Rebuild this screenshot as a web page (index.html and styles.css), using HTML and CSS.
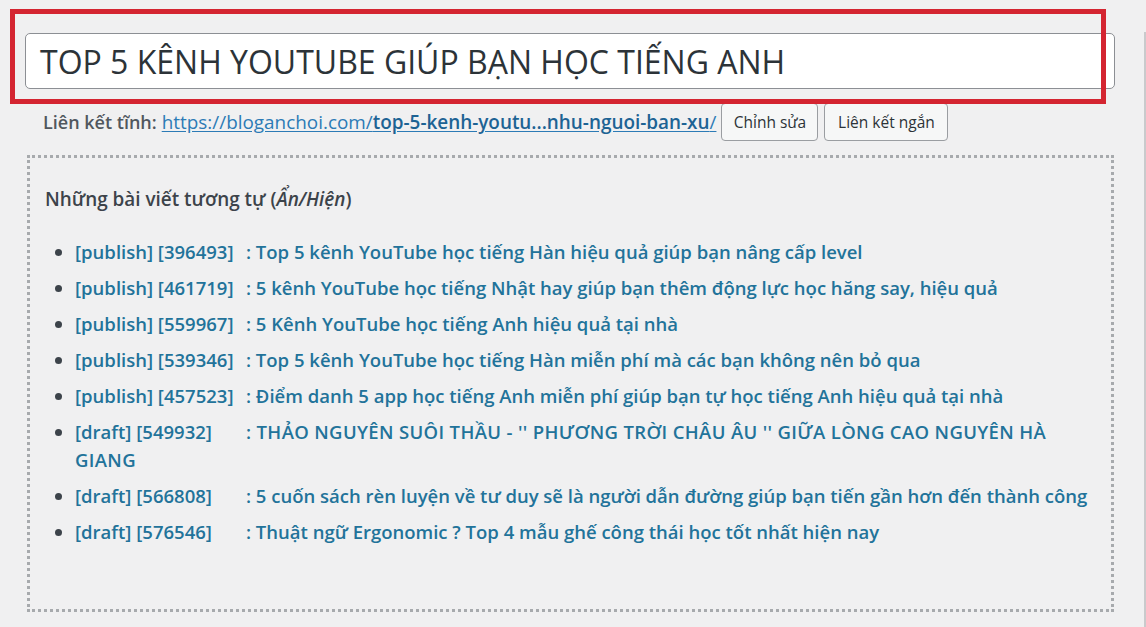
FILE: index.html
```html
<!DOCTYPE html>
<html lang="vi">
<head>
<meta charset="utf-8">
<title>Sửa bài viết</title>
<link rel="stylesheet" href="styles.css">
</head>
<body>
<div class="page">
  <div class="main">
    <div class="titlediv">
      <div class="title-input">TOP 5 KÊNH YOUTUBE GIÚP BẠN HỌC TIẾNG ANH</div>
      <div class="highlight"></div>
    </div>
    <div class="permalink">
      <span class="pl-label">Liên kết tĩnh:</span>
      <a class="pl-link" href="#">https://bloganchoi.com/<b>top-5-kenh-youtu...nhu-nguoi-ban-xu</b>/</a>
      <span class="btn btn-edit">Chỉnh sửa</span>
      <span class="btn btn-short">Liên kết ngắn</span>
    </div>
    <div class="related">
      <p class="related-head">Những bài viết tương tự (<em>Ẩn/Hiện</em>)</p>
      <ul class="related-list">
        <li><span class="meta">[publish] [396493]</span>: Top 5 kênh YouTube học tiếng Hàn hiệu quả giúp bạn nâng cấp level</li>
        <li><span class="meta">[publish] [461719]</span>: 5 kênh YouTube học tiếng Nhật hay giúp bạn thêm động lực học hăng say, hiệu quả</li>
        <li><span class="meta">[publish] [559967]</span>: 5 Kênh YouTube học tiếng Anh hiệu quả tại nhà</li>
        <li><span class="meta">[publish] [539346]</span>: Top 5 kênh YouTube học tiếng Hàn miễn phí mà các bạn không nên bỏ qua</li>
        <li><span class="meta">[publish] [457523]</span>: Điểm danh 5 app học tiếng Anh miễn phí giúp bạn tự học tiếng Anh hiệu quả tại nhà</li>
        <li class="caps"><span class="meta">[draft] [549932]</span>: THẢO NGUYÊN SUÔI THẦU - '' PHƯƠNG TRỜI CHÂU ÂU '' GIỮA LÒNG CAO NGUYÊN HÀ<br>GIANG</li>
        <li><span class="meta">[draft] [566808]</span>: 5 cuốn sách rèn luyện về tư duy sẽ là người dẫn đường giúp bạn tiến gần hơn đến thành công</li>
        <li><span class="meta">[draft] [576546]</span>: Thuật ngữ Ergonomic ? Top 4 mẫu ghế công thái học tốt nhất hiện nay</li>
      </ul>
    </div>
  </div>
  <div class="side"></div>
</div>
</body>
</html>
```
FILE: styles.css
```css
html, body {
  margin: 0;
  padding: 0;
  background: #f0f0f1;
}
body {
  font-family: "Open Sans", "Noto Sans", sans-serif;
  color: #3c434a;
  width: 1146px;
  height: 627px;
  overflow: hidden;
}
.page {
  display: flex;
  height: 627px;
}
.main {
  flex: 1;
}
.side {
  width: 0;
  margin-top: 32px;
  border-left: 2px solid #c9cacc;
}
.titlediv {
  position: relative;
  padding: 33px 0 0 25px;
}
.title-input {
  box-sizing: border-box;
  width: 1090px;
  height: 56px;
  background: #fff;
  border: 1px solid #8c8f94;
  border-radius: 5px;
  padding: 0 14px;
  font-size: 32px;
  line-height: 56px;
  color: #2c3338;
  white-space: nowrap;
}
.highlight {
  position: absolute;
  left: 10px;
  top: 9px;
  width: 1096px;
  height: 95px;
  box-sizing: border-box;
  border: 5px solid #d42531;
  pointer-events: none;
}
.permalink {
  display: flex;
  align-items: center;
  height: 38px;
  margin: 14px 0 0 43px;
  font-size: 18px;
  color: #50575e;
}
.pl-label {
  font-weight: 600;
  margin-right: 5px;
}
.pl-link {
  color: #2c7bb6;
  text-decoration: underline;
  text-underline-offset: 2px;
  font-size: 18.9px;
}
.pl-link b {
  font-weight: 600;
  color: #1d6394;
}
.btn {
  box-sizing: border-box;
  height: 38px;
  display: flex;
  align-items: center;
  justify-content: center;
  background: #f6f7f7;
  border: 1px solid #9a9da1;
  border-radius: 4px;
  color: #2c3338;
  font-size: 15.5px;
}
.btn-edit {
  width: 97px;
  margin-left: 5px;
}
.btn-short {
  width: 124px;
  margin-left: 6px;
}
.related {
  box-sizing: border-box;
  width: 1087px;
  height: 457px;
  margin: 14px 0 0 27px;
  border: 3px dotted #a7aaad;
  padding: 27px 22px 0 15px;
}
.related-head {
  margin: 0 0 25px 0;
  font-size: 18.9px;
  font-weight: 600;
  color: #3c434a;
  line-height: 28px;
}
.related-head em {
  font-style: italic;
}
.related-list {
  margin: 0;
  padding: 0 0 0 30px;
  list-style: disc;
  color: #22739a;
  font-size: 18.5px;
  font-weight: 600;
  line-height: 28px;
}
.related-list li {
  margin-bottom: 8px;
}
.related-list li::marker {
  color: #3c434a;
}
.meta {
  display: inline-block;
  width: 171px;
  letter-spacing: 0;
}
.caps {
  letter-spacing: 0.35px;
}
```
